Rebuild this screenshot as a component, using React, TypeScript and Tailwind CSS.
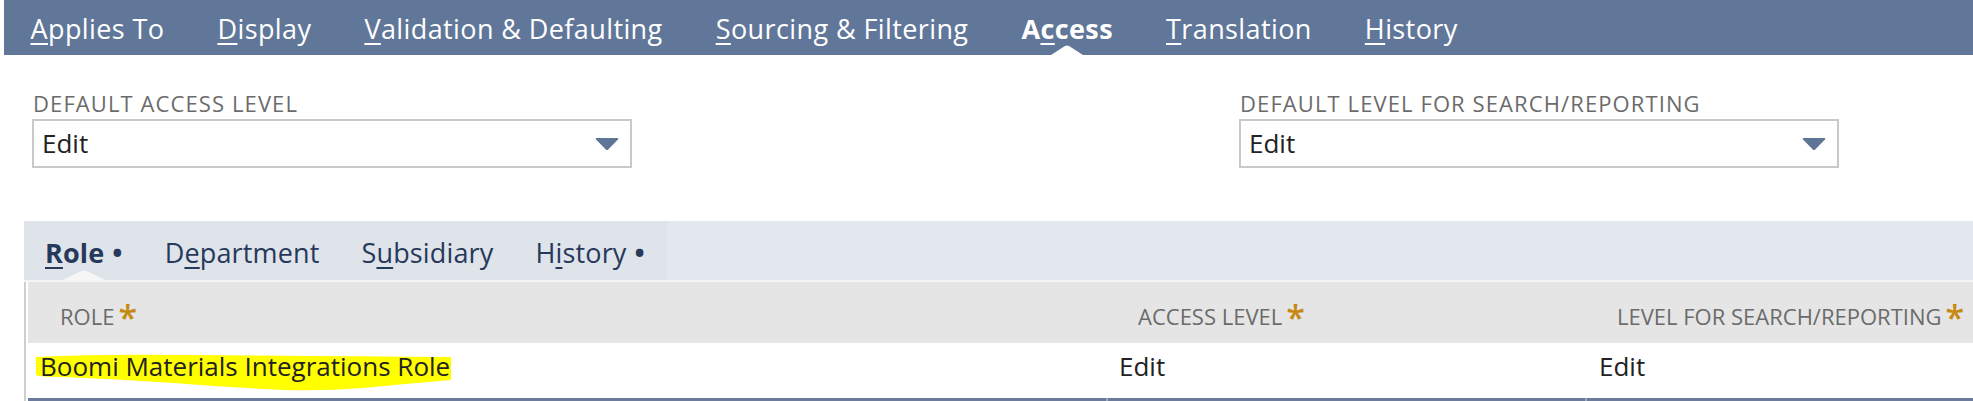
import React from "react";

const FONT = "font-['Open_Sans','DejaVu_Sans',sans-serif]";

function U({ children }: { children: React.ReactNode }) {
  return (
    <span className="underline decoration-[1.5px] underline-offset-[4px]">{children}</span>
  );
}

function TopTab({ pre, u, post, active }: { pre?: string; u: string; post: string; active?: boolean }) {
  return (
    <div className={`relative h-[55px] px-[26.5px] pt-[3px] text-[27px] tracking-[0.4px] leading-[51px] text-white whitespace-nowrap ${active ? "font-bold" : ""}`}>
      {pre}
      <U>{u}</U>
      {post}
      {active && (
        <svg className="absolute bottom-0 left-1/2 -translate-x-1/2" width="32" height="10" viewBox="0 0 32 10">
          <path d="M0 10 L14 1 Q16 0 18 1 L32 10 Z" fill="#ffffff" />
        </svg>
      )}
    </div>
  );
}

function SubTab({ pre, u, post, active, dot }: { pre?: string; u: string; post: string; active?: boolean; dot?: boolean }) {
  return (
    <div className={`relative h-[59px] px-[21px] pt-[5px] text-[27px] tracking-[0.15px] leading-[53px] text-[#26395b] whitespace-nowrap ${active ? "font-bold" : ""}`}>
      {pre}
      <U>{u}</U>
      {post}
      {dot && <span className="ml-[8px] font-bold">•</span>}
      {active && (
        <svg className="absolute bottom-0 left-1/2 -translate-x-1/2" width="43" height="10" viewBox="0 0 43 10">
          <path d="M0 10 L19 1 Q21.5 0 24 1 L43 10 Z" fill="#f6f6f6" />
        </svg>
      )}
    </div>
  );
}

function Select({ label }: { label: string }) {
  return (
    <div className="w-[600px]">
      <div className="pl-[1px] text-[22px] tracking-[1.1px] leading-[24px] text-[#6b6b6b] whitespace-nowrap">{label}</div>
      <div className="mt-[4px] flex h-[49px] items-center justify-between border-2 border-[#c9c9c9] bg-white pl-[8px] pr-[11px]">
        <span className="text-[26px] leading-[45px] text-[#222222]">Edit</span>
        <svg width="24" height="14" viewBox="0 0 24 14">
          <path d="M1.5 1 L22.5 1 Q24 1 23 2.5 L13.2 12.5 Q12 13.6 10.8 12.5 L1 2.5 Q0 1 1.5 1 Z" fill="#5f7596" />
        </svg>
      </div>
    </div>
  );
}

function HeadCell({ text }: { text: string }) {
  return (
    <div className="pl-[32px] pt-[7px] text-[22px] leading-[54px] text-[#6b6b6b] whitespace-nowrap">
      {text}
      <span className="relative top-[5px] ml-[4px] text-[34px] font-semibold leading-none text-[#c48a12]">*</span>
    </div>
  );
}

export default function App() {
  return (
    <div className={`${FONT} w-[1973px] h-[401px] overflow-hidden bg-white`}>
      {/* top tab bar */}
      <div className="ml-[4px] flex h-[55px] bg-[#617799]">
        <TopTab u="A" post="pplies To" />
        <TopTab u="D" post="isplay" />
        <TopTab u="V" post="alidation & Defaulting" />
        <TopTab u="S" post="ourcing & Filtering" />
        <TopTab pre="A" u="c" post="cess" active />
        <TopTab u="T" post="ranslation" />
        <TopTab u="H" post="istory" />
      </div>

      {/* default fields */}
      <div className="mt-[36px] flex gap-[607px] pl-[32px]">
        <Select label="DEFAULT ACCESS LEVEL" />
        <Select label="DEFAULT LEVEL FOR SEARCH/REPORTING" />
      </div>

      {/* sublist */}
      <div className="ml-[24px] mt-[53px]">
        <div className="flex h-[59px] bg-[#e3e7ee]">
          <div className="flex bg-[#dfe3ea] pr-[1px]">
            <SubTab u="R" post="ole" active dot />
            <SubTab pre="D" u="e" post="partment" />
            <SubTab pre="S" u="u" post="bsidiary" />
            <SubTab pre="H" u="i" post="story" dot />
          </div>
        </div>
        <div className="h-[2px] bg-[#f4f4f4]" />
        <div className="border-l-2 border-[#cfcfcf] pl-[2px]">
          <div className="grid h-[61px] grid-cols-[1078px_479px_1fr] bg-[#e5e5e5]">
            <HeadCell text="ROLE" />
            <HeadCell text="ACCESS LEVEL" />
            <HeadCell text="LEVEL FOR SEARCH/REPORTING" />
          </div>
          <div className="grid h-[55px] grid-cols-[1078px_479px_1fr] bg-white">
            <div className="relative pl-[12px] text-[26px] leading-[46px] text-[#222222] whitespace-nowrap">
              <svg className="absolute left-[6px] top-[10px]" width="420" height="42" viewBox="0 0 420 42">
                <path
                  d="M2 4 Q60 1 150 2 Q300 3 417 4 L417 27 Q380 30 330 35 Q290 38 250 37 Q190 34 140 30 Q80 26 30 24 Q6 24 2 22 Z"
                  fill="#ffff00"
                />
              </svg>
              <span className="relative">Boomi Materials Integrations Role</span>
            </div>
            <div className="pl-[13px] text-[26px] leading-[46px] text-[#222222]">Edit</div>
            <div className="pl-[14px] text-[26px] leading-[46px] text-[#222222]">Edit</div>
          </div>
          <div className="grid h-[3px] grid-cols-[1078px_479px_1fr] bg-[#6a7c99]">
            <div />
            <div className="border-l-2 border-[#9aa8bd]" />
            <div className="border-l-2 border-[#9aa8bd]" />
          </div>
        </div>
      </div>
    </div>
  );
}
